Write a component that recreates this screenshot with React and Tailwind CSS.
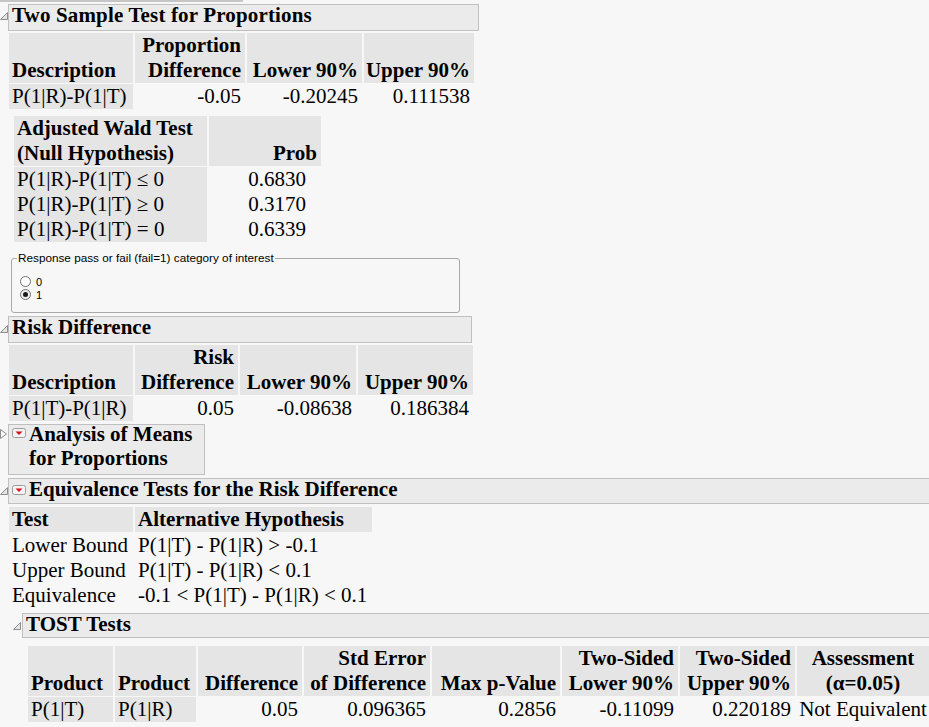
import React from 'react';

function OpenTri() {
  return (
    <svg width="8" height="8" viewBox="0 0 8 8" className="block">
      <path d="M7.5 0.5V7.5H0.5Z" fill="#e4e4e4" stroke="#8e8e8e" strokeWidth="1" />
    </svg>
  );
}

function ClosedTri() {
  return (
    <svg width="7" height="10" viewBox="0 0 7 10" className="block">
      <path d="M0.5 0.5L6.5 5L0.5 9.5Z" fill="#f7f7f7" stroke="#8e8e8e" strokeWidth="1" />
    </svg>
  );
}

function MenuIcon() {
  return (
    <svg width="14" height="10" viewBox="0 0 14 10" className="block shrink-0">
      <rect x="0.5" y="0.5" width="13" height="9" rx="2" fill="#f3f3f3" stroke="#9c9c9c" />
      <path d="M3.5 3.5H10.5L7 7Z" fill="#d4111e" />
    </svg>
  );
}

function Th({ children, align = 'right', className = '' }) {
  const a =
    align === 'left' ? 'text-left pl-[3px]' : align === 'center' ? 'text-center' : 'text-right pr-[4px]';
  return (
    <div className={`bg-[#e5e5e5] font-bold flex flex-col justify-end whitespace-nowrap ${a} ${className}`}>
      {children}
    </div>
  );
}

function Td({ children, align = 'right', gray = false, className = '' }) {
  const a =
    align === 'left' ? 'text-left pl-[3px]' : align === 'center' ? 'text-center' : 'text-right pr-[4px]';
  return (
    <div className={`whitespace-nowrap ${gray ? 'bg-[#e5e5e5]' : ''} ${a} ${className}`}>{children}</div>
  );
}

function Radio({ checked, label }) {
  return (
    <div className="flex items-center h-[13px]">
      <span
        className={`w-[11px] h-[11px] rounded-full border border-[#6f6f6f] flex items-center justify-center ${
          checked ? 'bg-[#eeeeee]' : 'bg-white'
        }`}
      >
        {checked && <span className="w-[5px] h-[5px] rounded-full bg-[#1a1a1a]" />}
      </span>
      <span className="ml-[5px] text-[11px] leading-[12px]">{label}</span>
    </div>
  );
}

export default function App() {
  return (
    <div className="w-[929px] h-[727px] overflow-hidden bg-[#f7f7f7] text-black font-['Liberation_Serif',serif] text-[21px] leading-[25px]">
      {/* tail of the previous report block */}
      <div className="h-[2px] w-[243px] bg-[#c6c6c6]" />

      {/* Two Sample Test for Proportions */}
      <div className="mt-[2px] flex items-start">
        <div className="w-[8px] mt-[8px]">
          <OpenTri />
        </div>
        <div className="w-[471px] h-[27px] border border-[#c0c0c0] bg-[#ebebeb] pl-[3px] font-bold leading-[21px] tracking-[0.15px] whitespace-nowrap">
          Two Sample Test for Proportions
        </div>
      </div>

      <div className="ml-[9px] mt-[2px] grid grid-cols-[124px_110px_115px_110px] gap-x-[2px] gap-y-[1px] w-max">
        <Th align="left">Description</Th>
        <Th>
          <span>Proportion</span>
          <span>Difference</span>
        </Th>
        <Th>Lower 90%</Th>
        <Th>Upper 90%</Th>
        <Td align="left" gray>P(1|R)-P(1|T)</Td>
        <Td>-0.05</Td>
        <Td>-0.20245</Td>
        <Td>0.111538</Td>
      </div>

      {/* Adjusted Wald */}
      <div className="ml-[14px] mt-[7px] grid grid-cols-[193px_112px] gap-x-[2px] w-max">
        <Th align="left" className="mb-[1px]">
          <span>Adjusted Wald Test</span>
          <span>(Null Hypothesis)</span>
        </Th>
        <Th className="mb-[1px]">Prob</Th>
        <Td align="left" gray>P(1|R)-P(1|T) ≤ 0</Td>
        <Td className="pr-[15px]">0.6830</Td>
        <Td align="left" gray>P(1|R)-P(1|T) ≥ 0</Td>
        <Td className="pr-[15px]">0.3170</Td>
        <Td align="left" gray>P(1|R)-P(1|T) = 0</Td>
        <Td className="pr-[15px]">0.6339</Td>
      </div>

      {/* category of interest */}
      <div className="relative ml-[11px] mt-[16px] w-[449px] h-[55px] border border-[#a8a8a8] rounded-[3px] font-['Liberation_Sans',sans-serif]">
        <span className="absolute -top-[8px] left-[5px] px-[1px] bg-[#f7f7f7] text-[11.75px] leading-[14px] whitespace-nowrap">
          Response pass or fail (fail=1) category of interest
        </span>
        <div className="pt-[16px] pl-[8px] flex flex-col">
          <Radio label="0" />
          <Radio label="1" checked />
        </div>
      </div>

      {/* Risk Difference */}
      <div className="mt-[3px] flex items-start">
        <div className="w-[8px] mt-[9px]">
          <OpenTri />
        </div>
        <div className="w-[464px] h-[27px] border border-[#c0c0c0] bg-[#ebebeb] pl-[3px] font-bold leading-[21px] whitespace-nowrap">
          Risk Difference
        </div>
      </div>

      <div className="ml-[9px] mt-[2px] grid grid-cols-[124px_103px_116px_115px] gap-x-[2px] gap-y-[1px] w-max">
        <Th align="left">Description</Th>
        <Th>
          <span>Risk</span>
          <span>Difference</span>
        </Th>
        <Th>Lower 90%</Th>
        <Th>Upper 90%</Th>
        <Td align="left" gray>P(1|T)-P(1|R)</Td>
        <Td>0.05</Td>
        <Td>-0.08638</Td>
        <Td>0.186384</Td>
      </div>

      {/* Analysis of Means (closed) */}
      <div className="mt-[3px] flex items-start">
        <div className="w-[8px] mt-[5px]">
          <ClosedTri />
        </div>
        <div className="w-[197px] h-[51px] border border-[#c0c0c0] bg-[#ebebeb] pl-[3px] flex items-start gap-[3px]">
          <div className="mt-[3px]">
            <MenuIcon />
          </div>
          <div className="font-bold whitespace-nowrap">
            <div className="leading-[19px]">Analysis of Means</div>
            <div className="leading-[29px]">for Proportions</div>
          </div>
        </div>
      </div>

      {/* Equivalence Tests */}
      <div className="mt-[3px] flex items-start">
        <div className="w-[8px] mt-[9px]">
          <OpenTri />
        </div>
        <div className="flex-1 h-[26px] border border-[#c0c0c0] border-r-0 bg-[#ebebeb] pl-[3px] flex items-start gap-[3px]">
          <div className="mt-[6px]">
            <MenuIcon />
          </div>
          <div className="font-bold leading-[21px] whitespace-nowrap">Equivalence Tests for the Risk Difference</div>
        </div>
      </div>

      <div className="ml-[9px] mt-[3px] grid grid-cols-[124px_237px] gap-x-[2px] w-max">
        <Th align="left" className="mb-[1px]">Test</Th>
        <Th align="left" className="mb-[1px]">Alternative Hypothesis</Th>
        <Td align="left">Lower Bound</Td>
        <Td align="left">P(1|T) - P(1|R) &gt; -0.1</Td>
        <Td align="left">Upper Bound</Td>
        <Td align="left">P(1|T) - P(1|R) &lt; 0.1</Td>
        <Td align="left">Equivalence</Td>
        <Td align="left">-0.1 &lt; P(1|T) - P(1|R) &lt; 0.1</Td>
      </div>

      {/* TOST Tests */}
      <div className="mt-[5px] ml-[13px] flex items-start">
        <div className="w-[9px] mt-[9px]">
          <OpenTri />
        </div>
        <div className="flex-1 h-[25px] border border-[#c0c0c0] border-r-0 bg-[#ebebeb] pl-[3px] font-bold leading-[21px] whitespace-nowrap">
          TOST Tests
        </div>
      </div>

      <div className="ml-[28px] mt-[8px] grid grid-cols-[85px_81px_104px_126px_128px_116px_115px_132px] gap-x-[2px] gap-y-[1px] w-max">
        <Th align="left">Product</Th>
        <Th align="left">Product</Th>
        <Th>Difference</Th>
        <Th>
          <span>Std Error</span>
          <span>of Difference</span>
        </Th>
        <Th>Max p-Value</Th>
        <Th>
          <span>Two-Sided</span>
          <span>Lower 90%</span>
        </Th>
        <Th>
          <span>Two-Sided</span>
          <span>Upper 90%</span>
        </Th>
        <Th align="center">
          <span>Assessment</span>
          <span>(α=0.05)</span>
        </Th>
        <Td align="left" gray>P(1|T)</Td>
        <Td align="left" gray>P(1|R)</Td>
        <Td>0.05</Td>
        <Td>0.096365</Td>
        <Td>0.2856</Td>
        <Td>-0.11099</Td>
        <Td>0.220189</Td>
        <Td align="center">Not Equivalent</Td>
      </div>
    </div>
  );
}
